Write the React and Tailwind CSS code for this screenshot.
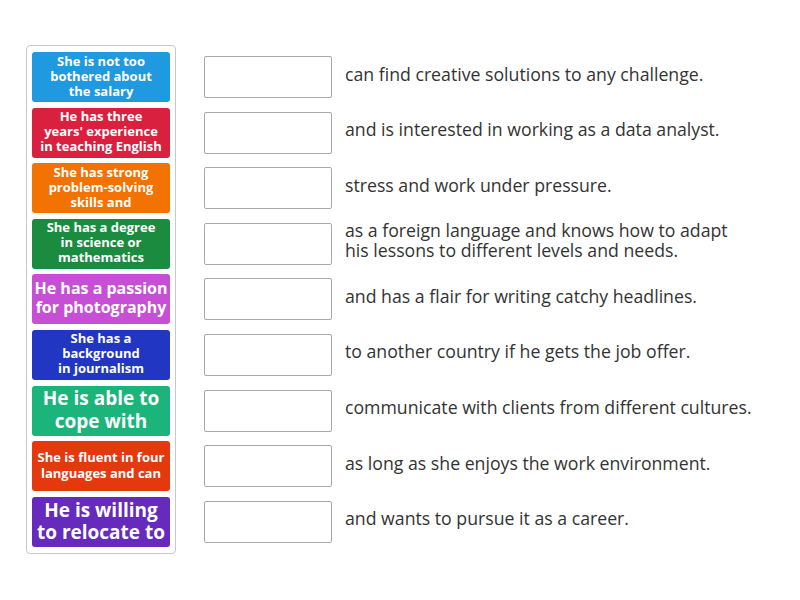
const cards = [
  {lines: ['She is not too', 'bothered about', 'the salary'], bg: 'bg-[#1f99e0]', size: 'text-[13px] leading-[15px]'},
  {lines: ['He has three', "years' experience", 'in teaching English'], bg: 'bg-[#d9213f]', size: 'text-[13px] leading-[15px]'},
  {lines: ['She has strong', 'problem-solving', 'skills and'], bg: 'bg-[#f27202]', size: 'text-[13px] leading-[15px]'},
  {lines: ['She has a degree', 'in science or', 'mathematics'], bg: 'bg-[#1b8c3f]', size: 'text-[13px] leading-[15px]'},
  {lines: ['He has a passion', 'for photography'], bg: 'bg-[#c74fd6]', size: 'text-[16px] leading-[19px]'},
  {lines: ['She has a', 'background', 'in journalism'], bg: 'bg-[#2236c4]', size: 'text-[13px] leading-[15px]'},
  {lines: ['He is able to', 'cope with'], bg: 'bg-[#1bb47b]', size: 'text-[19px] leading-[23px]'},
  {lines: ['She is fluent in four', 'languages and can'], bg: 'bg-[#e4390f]', size: 'text-[13px] leading-[16px]'},
  {lines: ['He is willing', 'to relocate to'], bg: 'bg-[#662abd]', size: 'text-[19px] leading-[22px]'},
];

const endings = [
  ['can find creative solutions to any challenge.'],
  ['and is interested in working as a data analyst.'],
  ['stress and work under pressure.'],
  ['as a foreign language and knows how to adapt', 'his lessons to different levels and needs.'],
  ['and has a flair for writing catchy headlines.'],
  ['to another country if he gets the job offer.'],
  ['communicate with clients from different cultures.'],
  ['as long as she enjoys the work environment.'],
  ['and wants to pursue it as a career.'],
];

function Card({card}) {
  return (
    <div
      className={`h-[50px] pb-[2px] rounded-[3px] ${card.bg} flex flex-col items-center justify-center text-white font-bold text-center ${card.size}`}
    >
      {card.lines.map((l) => (
        <span key={l} className="whitespace-nowrap">{l}</span>
      ))}
    </div>
  );
}

function Row({lines}) {
  return (
    <div className="h-[42px] flex items-center">
      <div className="w-[128px] h-[42px] shrink-0 border border-[#a9a9a9] rounded-[2px] bg-white" />
      <div className="ml-[13px] text-[17.7px] leading-[20px] text-[#333] -mt-[7px]">
        {lines.map((l) => (
          <div key={l} className="whitespace-nowrap">{l}</div>
        ))}
      </div>
    </div>
  );
}

export default function App() {
  return (
    <div
      className="w-[800px] h-[600px] bg-white relative"
      style={{fontFamily: '"Open Sans", "Liberation Sans", sans-serif'}}
    >
      <div className="flex pt-[45px] pl-[26px]">
        <div className="w-[150px] border border-[#c8c8c8] rounded-[4px] px-[5px] pt-[6px] pb-[6px] flex flex-col gap-[5.6px]">
          {cards.map((c, i) => (
            <Card key={i} card={c} />
          ))}
        </div>
        {/* answer slots */}
        <div className="ml-[28px] pt-[11px] flex flex-col gap-[13.6px]">
          {endings.map((e, i) => (
            <Row key={i} lines={e} />
          ))}
        </div>
      </div>
    </div>
  );
}
